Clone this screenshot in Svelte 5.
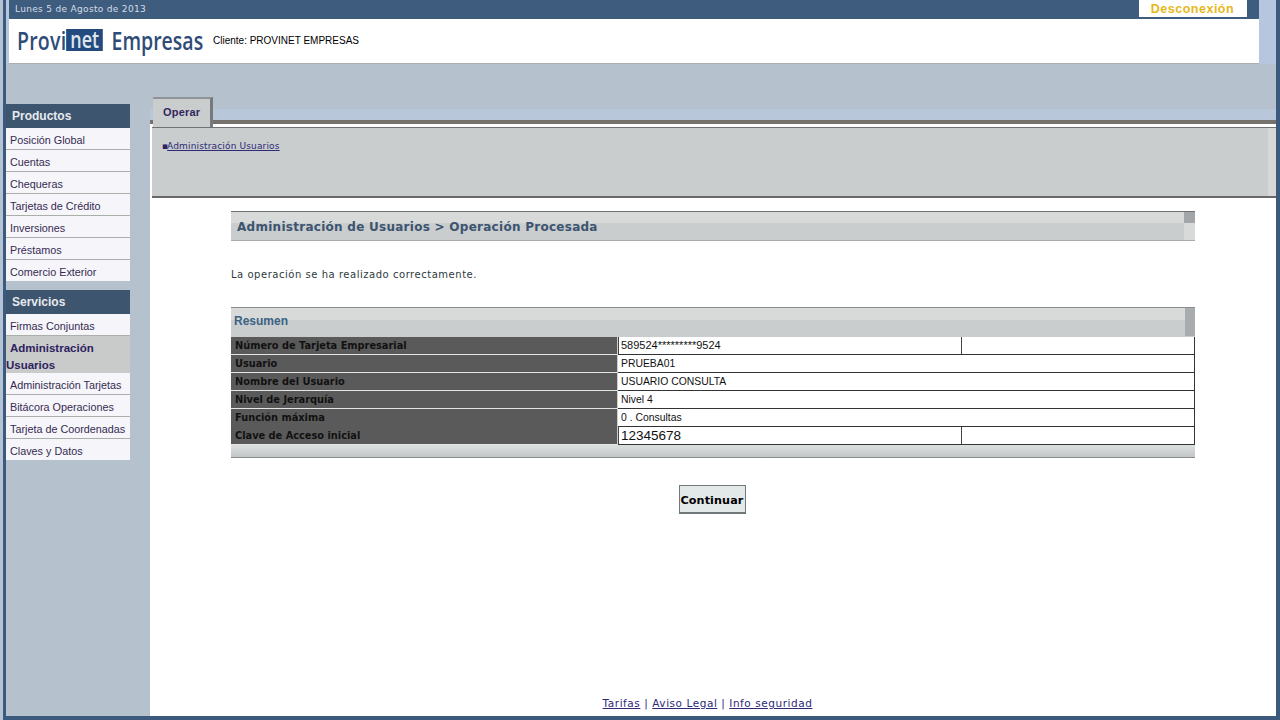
<script>
  const productos = ["Posición Global", "Cuentas", "Chequeras", "Tarjetas de Crédito", "Inversiones", "Préstamos", "Comercio Exterior"];
  const servicios = ["Firmas Conjuntas", "Administración Usuarios", "Administración Tarjetas", "Bitácora Operaciones", "Tarjeta de Coordenadas", "Claves y Datos"];
  const resumen = [
    { label: "Número de Tarjeta Empresarial", value: "589524*********9524", boxed: true },
    { label: "Usuario", value: "PRUEBA01" },
    { label: "Nombre del Usuario", value: "USUARIO CONSULTA" },
    { label: "Nivel de Jerarquía", value: "Nivel 4" },
    { label: "Función máxima", value: "0 . Consultas", merged: true },
    { label: "Clave de Acceso inicial", value: "12345678", boxed: true, big: true }
  ];
</script>

<style>
  :global(body) {
    margin: 0;
    background: #3c5a7c;
    font-family: "Liberation Sans", Arial, sans-serif;
  }

  .page {
    width: 1280px;
    height: 720px;
    box-sizing: border-box;
    overflow: hidden;
    padding: 0 4px 4px 3px;
    display: flex;
    flex-direction: column;
    border-left: 3px solid #b5c3d6;
    background: #3c5a7c;
  }

  .top {
    background: #b6c6de;
    padding-right: 17px;
    flex: none;
  }

  .datebar {
    height: 19px;
    margin-left: 3px;
    background: #3e5c7e;
    display: flex;
    justify-content: space-between;
    padding: 0 12px 0 6px;
  }

  .date {
    font-family: "DejaVu Sans", sans-serif;
    font-size: 9px;
    letter-spacing: 0.32px;
    line-height: 18px;
    color: #d5dde6;
  }

  .logout {
    width: 108px;
    height: 17px;
    box-sizing: border-box;
    padding-left: 1px;
    padding-right: 2px;
    background: #fff;
    text-align: center;
    font-size: 12.5px;
    font-weight: bold;
    letter-spacing: 0.5px;
    line-height: 19px;
    color: #e6b820;
  }

  .head {
    height: 44px;
    margin-left: 3px;
    background: #fff;
    border-bottom: 1px solid #a9aeb3;
    display: flex;
    align-items: center;
    padding-left: 8px;
    color: #000;
  }

  .logo {
    width: 196px;
    flex: none;
    margin-bottom: 3px;
  }

  .logo-text {
    display: flex;
    align-items: center;
    width: 250px;
    font-family: "Open Sans", sans-serif;
    font-size: 25px;
    font-weight: 600;
    color: #2f4c78;
    white-space: nowrap;
    transform: scaleX(0.78);
    transform-origin: left;
  }

  .provi {
    letter-spacing: 0.3px;
  }

  .net {
    background: #234b80;
    color: #dfe6ee;
    width: 47px;
    height: 22px;
    line-height: 21px;
    text-align: center;
    font-size: 23px;
    margin-right: 11px;
  }

  .client {
    font-size: 10px;
    margin-bottom: 1px;
  }

  .body {
    flex: 1;
    display: flex;
    min-height: 0;
    background: #b5c1cd;
  }

  .side {
    width: 144px;
    flex: none;
    padding-top: 40px;
    box-sizing: border-box;
  }

  .side h2 {
    margin: 0;
    width: 124px;
    height: 24px;
    box-sizing: border-box;
    padding-left: 6px;
    background: #3e556f;
    color: #e6eaee;
    font-size: 12px;
    line-height: 24px;
  }

  .side ul {
    margin: 0 0 9px;
    padding: 0;
    list-style: none;
    width: 124px;
  }

  .side li {
    height: 21px;
    padding-left: 4px;
    background: #f6f6fa;
    border-bottom: 1px solid #a9b0a9;
    font-size: 10.8px;
    line-height: 24px;
    color: #352a52;
    white-space: nowrap;
  }

  .side li:last-child {
    border-bottom: 0;
  }

  .side li.on {
    height: 33px;
    padding: 4px 0 0;
    background: #c9cbcb;
    border-bottom: 0;
    font-weight: bold;
    font-size: 11.5px;
    line-height: 17px;
    color: #2e2260;
    white-space: normal;
    text-indent: 4px;
  }

  .main {
    flex: 1;
    min-width: 0;
    display: flex;
    flex-direction: column;
    background: #fff;
  }

  .tabs {
    height: 60px;
    flex: none;
    box-sizing: border-box;
    background: #b5c1cd;
    box-shadow: inset 0 -11px #b8c8da;
    padding: 33px 0 0 3px;
    border-bottom: 4px solid #75726e;
  }

  .tab {
    position: relative;
    width: 60px;
    height: 30px;
    box-sizing: border-box;
    background: #c9cdcd;
    border-top: 2px solid #8f9498;
    border-right: 3px solid #757a7d;
    padding-left: 10px;
    font-size: 11px;
    font-weight: bold;
    letter-spacing: 0.2px;
    line-height: 26px;
    color: #33265e;
  }

  .panel {
    height: 71px;
    flex: none;
    box-sizing: border-box;
    margin: 3px 0 0 2px;
    background: linear-gradient(to left, #d6d8d8 8px, #c9cdcd 8px);
    border-top: 1px solid #6f7275;
    border-bottom: 2px solid #67696b;
    padding: 13px 0 0 10px;
    font-family: "DejaVu Sans", sans-serif;
    font-size: 9px;
    letter-spacing: 0.15px;
    color: #2e2260;
  }

  .dot {
    letter-spacing: -1px;
  }

  .panel a,
  .foot a {
    color: #2e2a78;
    text-decoration: underline;
  }

  .content {
    flex: 1;
    display: flex;
    flex-direction: column;
    align-items: center;
    padding-top: 13px;
    min-height: 0;
  }

  .title {
    width: 964px;
    height: 30px;
    box-sizing: border-box;
    background:
      linear-gradient(#a3a6a8, #a3a6a8) right top / 11px 11px no-repeat,
      linear-gradient(#d8dada, #d8dada) right bottom / 11px 18px no-repeat,
      linear-gradient(#d8dada 11px, #c9cdcd 11px);
    border-top: 1px solid #6d7073;
    border-bottom: 1px solid #a7abab;
    padding-left: 6px;
    font-family: "DejaVu Sans", sans-serif;
    font-size: 12px;
    font-weight: bold;
    letter-spacing: 0.27px;
    line-height: 30px;
    color: #3c5470;
  }

  .msg {
    width: 964px;
    margin: 28px 0 0;
    height: 38px;
    font-family: "DejaVu Sans", sans-serif;
    font-size: 10px;
    letter-spacing: 0.53px;
    line-height: 12px;
    color: #2d3a40;
  }

  .box {
    width: 964px;
    border-top: 1px solid #8a8d90;
  }

  .box h3 {
    margin: 0;
    height: 29px;
    padding-left: 3px;
    background:
      linear-gradient(#a9acae, #a9acae) right top / 10px 28px no-repeat,
      linear-gradient(#d8dada 12px, #c9cdcd 12px);
    font-size: 12px;
    line-height: 27px;
    color: #3a6284;
  }

  .row {
    display: grid;
    grid-template-columns: 387px 1fr;
    height: 18px;
    background: #fff;
  }

  .label {
    box-sizing: border-box;
    background: #5a5a5a;
    border-bottom: 1px solid #e4e6e6;
    border-right: 1px solid #c9cdcd;
    font-family: "DejaVu Sans", sans-serif;
    font-size: 9.8px;
    font-weight: bold;
    line-height: 17px;
    padding-left: 4px;
    color: #111;
    white-space: nowrap;
  }

  .merged .label {
    border-bottom: 0;
  }

  .value {
    font-size: 10.4px;
    line-height: 17px;
    padding-left: 3px;
    color: #111;
    border-right: 1px solid #333;
    border-bottom: 1px solid #333;
    display: grid;
    grid-template-columns: 341px 1fr;
  }

  .value.boxed {
    font-size: 11px;
  }

  .value.boxed span {
    border-left: 1px solid #444;
    border-right: 1px solid #444;
    margin-left: -3px;
    padding-left: 2px;
  }

  .value.big {
    font-size: 13.5px;
  }

  .boxfoot {
    height: 13px;
    background: linear-gradient(#dde0e0, #c2c6c6);
    border-bottom: 1px solid #8a8d90;
    box-sizing: border-box;
  }

  button {
    margin: 27px 2px 0 0;
    width: 67px;
    height: 29px;
    box-sizing: border-box;
    padding: 2px 0 0;
    background: #e3e8e8;
    border: 1px solid #70787a;
    border-bottom-width: 2px;
    font-family: "DejaVu Sans", sans-serif;
    font-size: 11.2px;
    font-weight: bold;
    letter-spacing: 0.1px;
    color: #000;
  }

  .foot {
    margin-top: auto;
    margin-right: 11px;
    padding-bottom: 7px;
    font-family: "DejaVu Sans", sans-serif;
    font-size: 10.5px;
    letter-spacing: 0.55px;
    color: #2e2a78;
  }
</style>

<div class="page">
  <div class="top">
    <div class="datebar">
      <span class="date">Lunes 5 de Agosto de 2013</span>
      <span class="logout">Desconexión</span>
    </div>
    <div class="head">
      <div class="logo">
        <div class="logo-text"><span class="provi">Provi</span><span class="net">net</span>Empresas</div>
      </div>
      <span class="client">Cliente: PROVINET EMPRESAS</span>
    </div>
  </div>
  <div class="body">
    <nav class="side">
      <h2>Productos</h2>
      <ul>
        {#each productos as item}
          <li>{item}</li>
        {/each}
      </ul>
      <h2>Servicios</h2>
      <ul>
        {#each servicios as item}
          <li class:on={item === "Administración Usuarios"}>{item}</li>
        {/each}
      </ul>
    </nav>
    <main class="main">
      <div class="tabs"><div class="tab">Operar</div></div>
      <div class="panel"><span class="dot">▪</span><a href="#admin">Administración Usuarios</a></div>
      <div class="content">
        <div class="title">Administración de Usuarios &gt; Operación Procesada</div>
        <p class="msg">La operación se ha realizado correctamente.</p>
        <div class="box">
          <h3>Resumen</h3>
          {#each resumen as row}
            <div class="row" class:merged={row.merged}>
              <div class="label">{row.label}</div>
              <div class="value" class:boxed={row.boxed} class:big={row.big}><span>{row.value}</span></div>
            </div>
          {/each}
          <div class="boxfoot"></div>
        </div>
        <button>Continuar</button>
        <div class="foot"><a href="#t">Tarifas</a> | <a href="#a">Aviso Legal</a> | <a href="#i">Info seguridad</a></div>
      </div>
    </main>
  </div>
</div>
